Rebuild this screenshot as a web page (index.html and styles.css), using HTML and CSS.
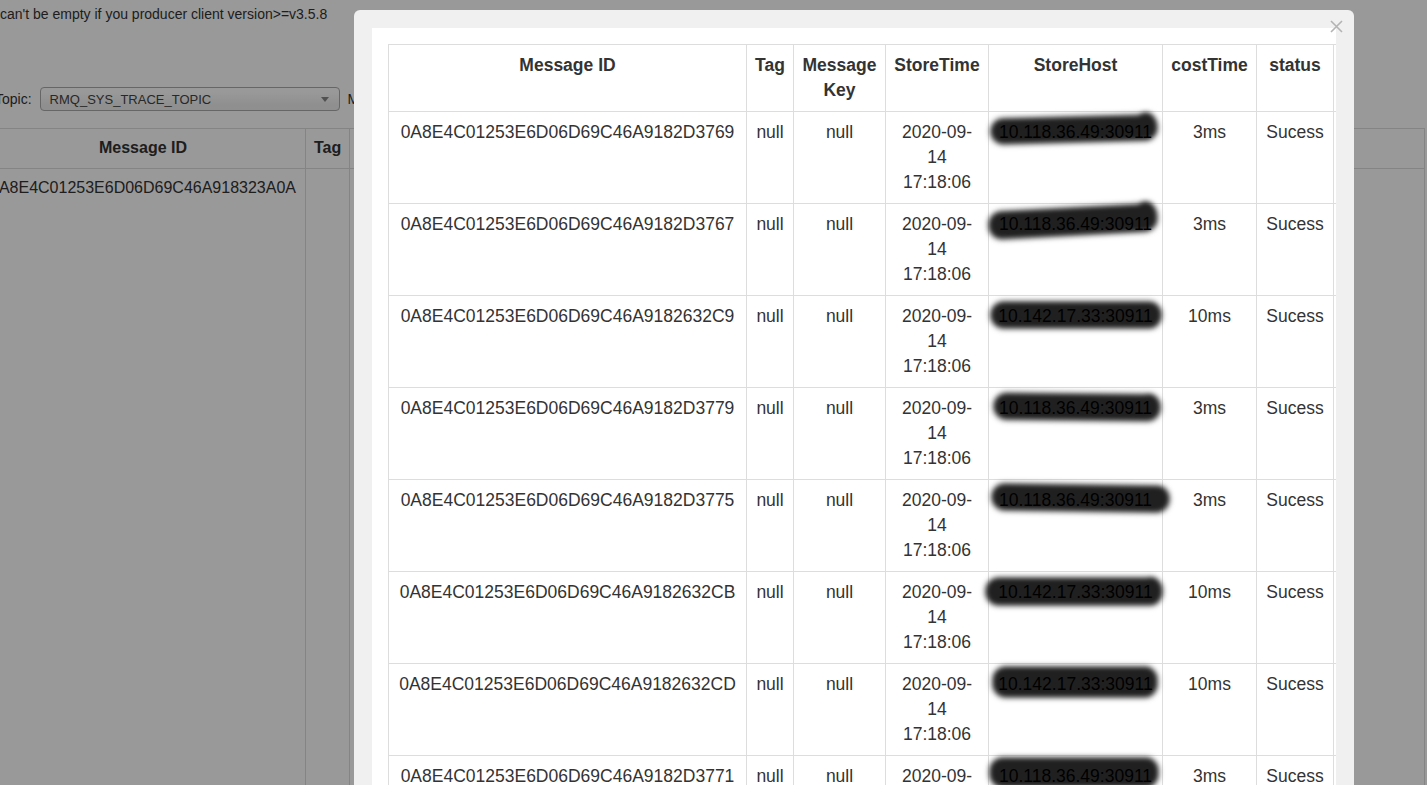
FILE: index.html
```html
<!DOCTYPE html>
<html>
<head>
<meta charset="utf-8">
<title>Message Trace</title>
<link rel="stylesheet" href="styles.css">
</head>
<body>
<div class="page">
  <p class="notice">can't be empty if you producer client version&gt;=v3.5.8</p>
  <div class="form-row">
    <span class="lbl">Topic:</span>
    <div class="select"><span>RMQ_SYS_TRACE_TOPIC</span><i class="caret"></i></div>
    <span class="lbl">MessageId:</span>
  </div>
  <table class="bg-table">
    <thead>
      <tr><th class="bg-id">Message ID</th><th class="bg-tag">Tag</th><th>Message Key</th><th>StoreTime</th><th>Operation</th></tr>
    </thead>
    <tbody>
      <tr><td class="bg-tall">0A8E4C01253E6D06D69C46A918323A0A</td><td></td><td></td><td></td><td></td></tr>
    </tbody>
  </table>
</div>

<div class="overlay"></div>

<div class="modal">
  <button class="close" aria-label="close">
    <svg width="13" height="13" viewBox="0 0 13 13"><path d="M1 1 L12 12 M12 1 L1 12" stroke="#b3b3b3" stroke-width="1.6" fill="none"/></svg>
  </button>
  <div class="modal-body">
    <table class="trace">
      <thead>
        <tr>
          <th class="w-id">Message ID</th>
          <th class="w-tag">Tag</th>
          <th class="w-key">Message Key</th>
          <th class="w-time">StoreTime</th>
          <th class="w-host">StoreHost</th>
          <th class="w-cost">costTime</th>
          <th class="w-status">status</th>
          <th class="w-type">traceType</th>
        </tr>
      </thead>
      <tbody>
        <tr><td>0A8E4C01253E6D06D69C46A9182D3769</td><td>null</td><td>null</td><td>2020-09-14 17:18:06</td><td class="host"><i class="blob b1"></i><span class="ip">10.118.36.49:30911</span></td><td>3ms</td><td>Sucess</td><td>Pub</td></tr>
        <tr><td>0A8E4C01253E6D06D69C46A9182D3767</td><td>null</td><td>null</td><td>2020-09-14 17:18:06</td><td class="host"><i class="blob b2"></i><span class="ip">10.118.36.49:30911</span></td><td>3ms</td><td>Sucess</td><td>Pub</td></tr>
        <tr><td>0A8E4C01253E6D06D69C46A9182632C9</td><td>null</td><td>null</td><td>2020-09-14 17:18:06</td><td class="host"><i class="blob b3"></i><span class="ip">10.142.17.33:30911</span></td><td>10ms</td><td>Sucess</td><td>Pub</td></tr>
        <tr><td>0A8E4C01253E6D06D69C46A9182D3779</td><td>null</td><td>null</td><td>2020-09-14 17:18:06</td><td class="host"><i class="blob b4"></i><span class="ip">10.118.36.49:30911</span></td><td>3ms</td><td>Sucess</td><td>Pub</td></tr>
        <tr><td>0A8E4C01253E6D06D69C46A9182D3775</td><td>null</td><td>null</td><td>2020-09-14 17:18:06</td><td class="host"><i class="blob b5"></i><span class="ip">10.118.36.49:30911</span></td><td>3ms</td><td>Sucess</td><td>Pub</td></tr>
        <tr><td>0A8E4C01253E6D06D69C46A9182632CB</td><td>null</td><td>null</td><td>2020-09-14 17:18:06</td><td class="host"><i class="blob b6"></i><span class="ip">10.142.17.33:30911</span></td><td>10ms</td><td>Sucess</td><td>Pub</td></tr>
        <tr><td>0A8E4C01253E6D06D69C46A9182632CD</td><td>null</td><td>null</td><td>2020-09-14 17:18:06</td><td class="host"><i class="blob b7"></i><span class="ip">10.142.17.33:30911</span></td><td>10ms</td><td>Sucess</td><td>Pub</td></tr>
        <tr><td>0A8E4C01253E6D06D69C46A9182D3771</td><td>null</td><td>null</td><td>2020-09-14 17:18:06</td><td class="host"><i class="blob b8"></i><span class="ip">10.118.36.49:30911</span></td><td>3ms</td><td>Sucess</td><td>Pub</td></tr>
      </tbody>
    </table>
  </div>
</div>
</body>
</html>
```

FILE: styles.css
```css
html, body {
  margin: 0;
  padding: 0;
  height: 100%;
  overflow: hidden;
  background: #fff;
  font-family: "Liberation Sans", Arial, sans-serif;
  color: #333;
}

/* ---------- background page ---------- */
.page {
  margin-left: -20px;
  width: 1465px;
}

.notice {
  margin: 0;
  padding: 4px 0 0 20px;
  font-size: 14px;
  line-height: 20px;
}

.form-row {
  display: flex;
  align-items: center;
  gap: 8px;
  margin-top: 63px;
  padding-left: 15px;
  height: 24px;
  font-size: 14px;
}

.select {
  box-sizing: border-box;
  width: 300px;
  height: 24px;
  border: 1px solid #aaa;
  border-radius: 4px;
  background: linear-gradient(#ffffff 20%, #eeeeee 80%);
  display: flex;
  align-items: center;
  justify-content: space-between;
  padding: 0 10px 0 9px;
  font-size: 13px;
  color: #444;
}

.caret {
  width: 0;
  height: 0;
  border-left: 4px solid transparent;
  border-right: 4px solid transparent;
  border-top: 5px solid #888;
}

.bg-table {
  margin-top: 17px;
  border-collapse: collapse;
  table-layout: fixed;
  width: 1445px;
  font-size: 16px;
  line-height: 22.85px;
}

.bg-table th,
.bg-table td {
  border: 1px solid #ddd;
  padding: 8px;
  text-align: center;
  vertical-align: top;
}

.bg-id { width: 308px; }
.bg-tag { width: 27px; }
.bg-tall { height: 640px; }

/* ---------- overlay + modal ---------- */
.overlay {
  position: fixed;
  inset: 0;
  background: rgba(0, 0, 0, 0.4);
}

.modal {
  position: fixed;
  left: 354px;
  top: 10px;
  width: 1000px;
  box-sizing: border-box;
  padding: 18px;
  background: #f0f0f0;
  border-radius: 6px;
}

.close {
  position: absolute;
  top: 10px;
  right: 11px;
  width: 13px;
  height: 13px;
  padding: 0;
  border: 0;
  background: none;
  display: block;
  line-height: 0;
  z-index: 2;
}

.modal-body {
  background: #fff;
  padding: 16px;
  overflow: hidden;
}

.trace {
  border-collapse: collapse;
  table-layout: fixed;
  width: 1062px;
  font-size: 17.5px;
  line-height: 25px;
  color: #333;
}

.trace th,
.trace td {
  border: 1px solid #ddd;
  padding: 8px;
  text-align: center;
  vertical-align: top;
}

.trace th { font-weight: bold; }

.w-id { width: 341px; }
.w-tag { width: 30px; }
.w-key { width: 75px; }
.w-time { width: 86px; }
.w-host { width: 157px; }
.w-cost { width: 77px; }
.w-status { width: 60px; }
.w-type { width: 100px; }

/* ---------- redaction scribble ---------- */
.host { position: relative; }

.ip {
  position: relative;
  z-index: 1;
  color: #000;
  white-space: nowrap;
}

.blob {
  position: absolute;
  z-index: 0;
  left: 2px;
  top: 5px;
  width: 166px;
  height: 24px;
  background: #202020;
  border-radius: 13px;
  filter: blur(2.8px);
  box-shadow: 0 0 3px 1px rgba(30, 30, 30, 0.6);
}

.blob::after {
  content: "";
  position: absolute;
  right: 0;
  top: -3px;
  width: 22px;
  height: 28px;
  border-radius: 50%;
  background: #202020;
}

.b1 { left: 2px; top: 5px; width: 166px; height: 25px; transform: rotate(-1.5deg); }
.b2 { left: 0; top: 4px; width: 168px; height: 27px; transform: rotate(-3deg); }
.b3 { left: 2px; top: 6px; width: 170px; height: 26px; }
.b3::after { top: 0; height: 26px; }
.b4 { left: 5px; top: 6px; width: 166px; height: 26px; transform: rotate(0.6deg); }
.b4::after { top: -1px; height: 26px; }
.b5 { left: 3px; top: 5px; width: 177px; height: 26px; transform: rotate(0.8deg); }
.b5::after { top: 0; height: 25px; }
.b6 { left: -3px; top: 6px; width: 176px; height: 27px; }
.b6::after { top: -1px; height: 28px; }
.b7 { left: 4px; top: 3px; width: 164px; height: 30px; }
.b7::after { top: 0; height: 30px; }
.b8 { left: 1px; top: 2px; width: 168px; height: 29px; }
.b8::after { top: 0; height: 29px; }
```
